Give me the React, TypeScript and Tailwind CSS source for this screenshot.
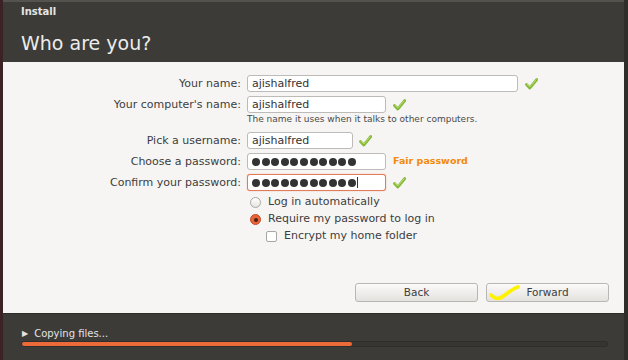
import React from "react";

const font = { fontFamily: '"DejaVu Sans", "Noto Sans", sans-serif' };

function Check() {
  return (
    <svg width="13" height="12" viewBox="0 0 13 12" className="shrink-0">
      <path d="M1.5 6.5 L4.8 10 L11.8 1.5" fill="none" stroke="#86b83a" strokeWidth="2.8" strokeLinecap="round" strokeLinejoin="round" />
      <path d="M2 6.2 L4.8 9 L11 1.8" fill="none" stroke="#b9de72" strokeWidth="1" strokeLinecap="round" strokeLinejoin="round" />
    </svg>
  );
}

function Dots({ n }: { n: number }) {
  return (
    <div className="flex items-center gap-[1.6px]">
      {Array.from({ length: n }).map((_, i) => (
        <div key={i} className="w-[8px] h-[8px] rounded-full bg-[#333]" />
      ))}
    </div>
  );
}

function Label({ children }: { children: React.ReactNode }) {
  return <div className="text-right text-[11px] text-[#3d3d3d] leading-[17px] pr-[6px]">{children}</div>;
}

/** Ubuntu 安装向导：用户信息页 */
export default function App() {
  return (
    <div style={font} className="w-[628px] h-[360px] bg-[#3c3b37] flex flex-col border-l-[3px] border-l-[#3a2225] border-r-[4px] border-r-[#2f2e2b] overflow-hidden">
      {/* 标题栏 */}
      <div className="h-[62px] shrink-0 border-t-[2px] border-t-[#55534e] pl-[18px]">
        <div className="text-[10px] font-bold text-[#e6e6e6] mt-[3px] leading-[14px]">Install</div>
        <div className="text-[19px] text-[#ececec] mt-[12px] leading-[24px]">Who are you?</div>
      </div>

      {/* 表单 */}
      <div className="h-[251px] shrink-0 bg-[#f6f5f4] relative">
        <div className="grid grid-cols-[244px_auto] mt-[13px] items-center">
          <Label>Your name:</Label>
          <div className="flex items-center gap-[7px]">
            <div className="w-[271px] h-[17px] border border-[#bdbbb8] rounded-[3px] bg-white text-[11px] text-[#333] px-[4px] leading-[15px]">ajishalfred</div>
            <Check />
          </div>

          <div className="col-span-2 h-[4px]" />
          <Label>Your computer's name:</Label>
          <div className="flex items-center gap-[7px]">
            <div className="w-[139px] h-[17px] border border-[#bdbbb8] rounded-[3px] bg-white text-[11px] text-[#333] px-[4px] leading-[15px]">ajishalfred</div>
            <Check />
          </div>
          <div />
          <div className="text-[9px] text-[#4a4a4a] leading-[12px]">The name it uses when it talks to other computers.</div>

          <div className="col-span-2 h-[7px]" />
          <Label>Pick a username:</Label>
          <div className="flex items-center gap-[6px]">
            <div className="w-[106px] h-[17px] border border-[#bdbbb8] rounded-[3px] bg-white text-[11px] text-[#333] px-[4px] leading-[15px]">ajishalfred</div>
            <Check />
          </div>

          <div className="col-span-2 h-[4px]" />
          <Label>Choose a password:</Label>
          <div className="flex items-center gap-[7px]">
            <div className="w-[139px] h-[17px] border border-[#bdbbb8] rounded-[3px] bg-white px-[4px] flex items-center">
              <Dots n={11} />
            </div>
            <span className="text-[9.5px] font-bold text-[#f28a0a]">Fair password</span>
          </div>

          <div className="col-span-2 h-[4px]" />
          <Label>Confirm your password:</Label>
          <div className="flex items-center gap-[7px]">
            <div className="w-[139px] h-[17px] border border-[#e37a58] rounded-[3px] bg-white px-[4px] flex items-center shadow-[0_0_1px_#e37a58]">
              <Dots n={11} />
              <div className="w-px h-[11px] bg-[#333] ml-[1px]" />
            </div>
            <Check />
          </div>
        </div>

        {/* 登录选项 */}
        <div className="ml-[247px] mt-[3px] flex flex-col text-[11px] text-[#3d3d3d]">
          <div className="flex items-center gap-[7px] h-[17px]">
            <div className="w-[11px] h-[11px] rounded-full border border-[#a9a7a3] bg-gradient-to-b from-white to-[#e7e5e2]" />
            <span>Log in automatically</span>
          </div>
          <div className="flex items-center gap-[7px] h-[17px]">
            <div className="w-[11px] h-[11px] rounded-full border border-[#c44a25] bg-[#e8653a] flex items-center justify-center">
              <div className="w-[4px] h-[4px] rounded-full bg-[#4a2010]" />
            </div>
            <span>Require my password to log in</span>
          </div>
          <div className="flex items-center gap-[7px] h-[17px] pl-[16px]">
            <div className="w-[11px] h-[11px] rounded-[2px] border border-[#a9a7a3] bg-white" />
            <span>Encrypt my home folder</span>
          </div>
        </div>

        {/* 按钮 */}
        <div className="absolute right-[15px] bottom-[11px] flex gap-[8px]">
          <div className="w-[123px] h-[19px] rounded-[3px] border border-[#b9b7b3] bg-gradient-to-b from-[#fbfaf9] to-[#e4e2df] text-[10.5px] text-[#3d3d3d] flex items-center justify-center">Back</div>
          <div className="relative w-[123px] h-[19px] rounded-[3px] border border-[#b9b7b3] bg-gradient-to-b from-[#fbfaf9] to-[#e4e2df] text-[10.5px] text-[#3d3d3d] flex items-center justify-center">
            Forward
            <svg className="absolute left-[1px] top-[0px]" width="34" height="18" viewBox="0 0 34 18">
              <path d="M3 11 C6 14, 9 16, 14 13 C19 10, 24 5, 30 3" fill="none" stroke="#fff200" strokeWidth="3.8" strokeLinecap="round" />
            </svg>
          </div>
        </div>
      </div>

      {/* 进度 */}
      <div className="flex-1 border-t border-t-[#2e2d2a] pl-[18px] pr-[16px] pt-[13px]">
        <div className="flex items-center gap-[6px] text-[10px] text-[#e4e4e4] leading-[13px]">
          <span className="text-[8px] ml-[1px]">▶</span>
          <span>Copying files...</span>
        </div>
        <div className="mt-[1px] h-[6px] rounded-full bg-[#363531] border border-[#2f2e2b]">
          <div className="h-full w-[330px] rounded-full bg-[#ec6a3a]" />
        </div>
      </div>
    </div>
  );
}
